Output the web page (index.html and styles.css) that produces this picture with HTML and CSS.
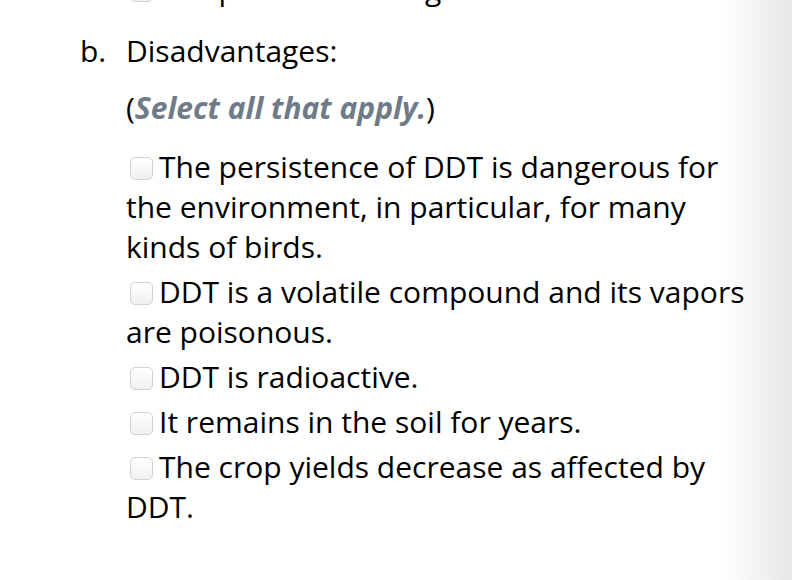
FILE: index.html
```html
<!DOCTYPE html>
<html lang="en">
<head>
<meta charset="utf-8">
<title>Disadvantages</title>
<link rel="stylesheet" href="styles.css">
</head>
<body>
<div class="page">
  <ul class="options prev">
    <li class="option"><input type="checkbox" class="box"><span>The pesticide is long lived.</span></li>
  </ul>
  <div class="question">
    <div class="q-head"><span class="q-label">b.</span><span class="q-title">Disadvantages:</span></div>
    <div class="q-body">
      <p class="hint">(<em>Select all that apply.</em>)</p>
      <ul class="options">
        <li class="option"><input type="checkbox" class="box">The persistence of DDT is dangerous for the environment, in particular, for many kinds of birds.</li>
        <li class="option"><input type="checkbox" class="box">DDT is a volatile compound and its vapors are poisonous.</li>
        <li class="option"><input type="checkbox" class="box">DDT is radioactive.</li>
        <li class="option"><input type="checkbox" class="box">It remains in the soil for years.</li>
        <li class="option"><input type="checkbox" class="box">The crop yields decrease as affected by DDT.</li>
      </ul>
    </div>
  </div>
</div>
</body>
</html>
```

FILE: styles.css
```css
html, body {
  margin: 0;
  padding: 0;
  height: 100%;
  overflow: hidden;
}

body {
  background: linear-gradient(to right, #ffffff 0, #ffffff 722px, #e7e7e7 792px);
  font-family: "Open Sans", "Liberation Sans", sans-serif;
  font-size: 30px;
  line-height: 40px;
  color: #000;
}

.page {
  margin-top: -31px;
  padding-left: 80px;
  width: 678px;
}

.options {
  list-style: none;
  margin: 0;
  padding: 0 0 0 46px;
}

.prev {
  margin-bottom: 22px;
}

.option + .option {
  margin-top: 5px;
}

.box {
  -webkit-appearance: none;
  appearance: none;
  width: 23px;
  height: 23px;
  box-sizing: border-box;
  margin: 0 6px 0 4px;
  border: 1px solid #d2d2d2;
  border-radius: 5px;
  background: linear-gradient(#ffffff, #f0f0f0);
  vertical-align: -2px;
}

.q-head {
  display: flex;
}

.q-label {
  width: 46px;
  flex: none;
}

.q-body {
  padding-top: 17px;
}

.hint {
  margin: 0 0 19px 46px;
}

.hint em {
  font-weight: 700;
  color: #6f7b88;
}
```
